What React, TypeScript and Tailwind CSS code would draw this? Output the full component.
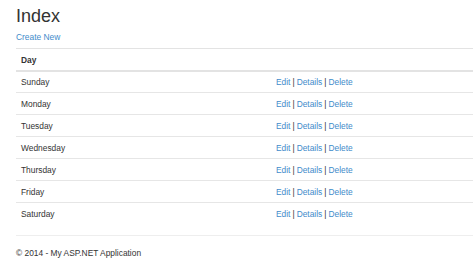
import React from "react";

const days = ["Sunday", "Monday", "Tuesday", "Wednesday", "Thursday", "Friday", "Saturday"];

function Actions() {
  return (
    <div className="flex items-center text-[#333]">
      <a className="text-[#428bca]">Edit</a>
      <span className="px-[2px]">|</span>
      <a className="text-[#428bca]">Details</a>
      <span className="px-[2px]">|</span>
      <a className="text-[#428bca]">Delete</a>
    </div>
  );
}

export default function App() {
  return (
    <div
      className="w-[473px] h-[261px] bg-white pl-[16px] overflow-hidden text-[#333] text-[8.4px] leading-[12px]"
      style={{ fontFamily: '"Liberation Sans", Arial, sans-serif' }}
    >
      <h2 className="mt-[6px] text-[18px] leading-[20px] font-normal">Index</h2>
      <div className="mt-[5px]">
        <a className="text-[#428bca]">Create New</a>
      </div>
      <div className="mt-[5px] flex flex-col">
        <div className="flex h-[24px] items-center border-t border-b-2 border-[#e3e3e3] font-bold">
          <div className="w-[260px] pl-[5px]">Day</div>
          <div className="flex-1"></div>
        </div>
        {days.map((d, i) => (
          <div
            key={d}
            className={
              i === 0
                ? "flex h-[20px] items-center"
                : "flex h-[22px] items-center border-t border-[#e6e6e6]"
            }
          >
            <div className="w-[260px] pl-[5px]">{d}</div>
            <div className="flex-1">
              <Actions />
            </div>
          </div>
        ))}
      </div>
      <div className="mt-[11px] border-t border-[#eeeeee]"></div>
      <div className="mt-[11px]">© 2014 - My ASP.NET Application</div>
    </div>
  );
}
